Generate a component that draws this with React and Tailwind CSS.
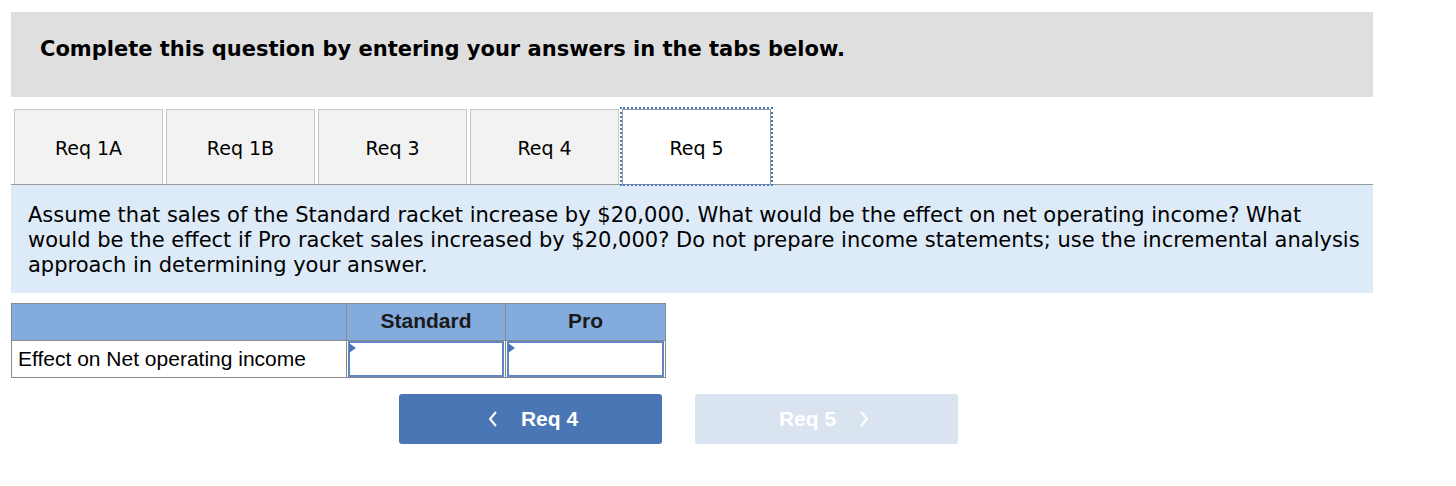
import React from 'react';

const tabs = ['Req 1A', 'Req 1B', 'Req 3', 'Req 4', 'Req 5'];

const Chevron = ({ dir }) => (
  <svg width="12" height="18" viewBox="0 0 12 18" fill="none" stroke="currentColor" strokeWidth="2">
    {dir === 'left' ? <path d="M9 2 L3 9 L9 16" /> : <path d="M3 2 L9 9 L3 16" />}
  </svg>
);

const AnswerCell = () => (
  <td className="border border-[#8a8a8a] p-0 relative">
    <div className="h-[36px] border-2 border-[#5f87c6] bg-white mx-[1px]" />
    <span className="absolute left-[2px] top-[2px] w-0 h-0 border-y-[5px] border-y-transparent border-l-[7px] border-l-[#4a76b5]" />
  </td>
);

export default function App() {
  return (
    <div className="bg-white min-h-[486px] pt-[12px] pl-[11px]" style={{ fontFamily: '"DejaVu Sans", Verdana, sans-serif' }}>
      <div className="w-[1362px]">
        <div className="bg-[#dfdfdf] h-[85px] pl-[29px] pt-[23px]">
          <h2 className="text-[21px] leading-[28px] font-bold text-black">Complete this question by entering your answers in the tabs below.</h2>
        </div>

        <div className="mt-[12px] flex gap-[3px] pl-[3px] border-b border-[#999]">
          {tabs.map((t, i) => (
            <div
              key={t}
              className={
                'w-[149px] h-[75px] flex items-center justify-center pt-[2px] text-[19px] text-black border border-b-0 ' +
                (i === 4
                  ? 'bg-white border-[#999] outline-2 outline-dotted outline-[#4a76c4]'
                  : 'bg-[#f2f2f2] border-[#c8c8c8]')
              }
            >
              {t}
            </div>
          ))}
        </div>

        <div className="bg-[#ddeaf7] h-[108px] pl-[17px] pr-[10px] pt-[18px] text-[21px] leading-[25px] text-black">
          Assume that sales of the Standard racket increase by $20,000. What would be the effect on net operating income? What would be the effect if Pro racket sales increased by $20,000? Do not prepare income statements; use the incremental analysis approach in determining your answer.
        </div>

        <div className="mt-[10px]" style={{ fontFamily: '"Liberation Sans", Arial, sans-serif' }}>
          <table className="border-collapse text-[21px] text-black">
            <tbody>
              <tr className="bg-[#84abdd] h-[37px]">
                <th className="w-[335px] border border-[#8a8a8a]" />
                <th className="w-[159px] border border-[#8a8a8a] font-bold text-[#1a1a1a] pb-[2px]">Standard</th>
                <th className="w-[160px] border border-[#8a8a8a] font-bold text-[#1a1a1a] pb-[2px]">Pro</th>
              </tr>
              <tr className="h-[37px]">
                <td className="border border-[#8a8a8a] pl-[6px]">Effect on Net operating income</td>
                <AnswerCell />
                <AnswerCell />
              </tr>
            </tbody>
          </table>

          <div className="mt-[16px] flex gap-[33px] pl-[388px]">
            <button className="w-[263px] h-[50px] rounded-[3px] bg-[#4a76b5] text-white font-bold text-[21px] flex items-center justify-center gap-[22px] pl-[4px]">
              <Chevron dir="left" />
              <span>Req 4</span>
            </button>
            <button className="w-[263px] h-[50px] rounded-[3px] bg-[#dae4f0] text-white font-bold text-[21px] flex items-center justify-center gap-[22px] pr-[4px]">
              <span>Req 5</span>
              <Chevron dir="right" />
            </button>
          </div>
        </div>
      </div>
    </div>
  );
}
